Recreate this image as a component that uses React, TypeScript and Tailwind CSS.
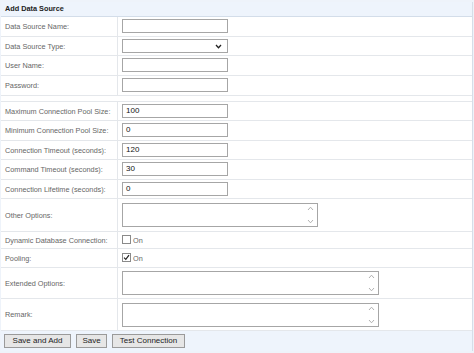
import React from 'react';

const Chevron = () => (
  <svg width="7" height="5" viewBox="0 0 7 5" className="absolute right-[5px] top-[4px]">
    <path d="M1 1 L3.5 3.8 L6 1" fill="none" stroke="#222" strokeWidth="1.3" />
  </svg>
);

const ScrollArrows = () => (
  <div className="absolute right-[3px] top-[2px] bottom-[2px] flex flex-col justify-between">
    <svg width="7" height="5" viewBox="0 0 7 5">
      <path d="M1 4 L3.5 1.2 L6 4" fill="none" stroke="#a8a8a8" strokeWidth="0.9" />
    </svg>
    <svg width="7" height="5" viewBox="0 0 7 5">
      <path d="M1 1 L3.5 3.8 L6 1" fill="none" stroke="#a8a8a8" strokeWidth="0.9" />
    </svg>
  </div>
);

const Row: React.FC<{ label: string; h?: string; children?: React.ReactNode }> = ({ label, h = 'h-[19.5px]', children }) => (
  <div className={`flex ${h} border-b border-[#e4e7eb]`}>
    <div className="w-[117px] shrink-0 flex items-center pl-[4px] pt-[1px] text-[#666] border-r border-[#e4e7eb]">{label}</div>
    <div className="flex items-center pl-[4px]">{children}</div>
  </div>
);

const Input: React.FC<{ value?: string }> = ({ value = '' }) => (
  <div className="w-[106px] h-[14px] border border-[#a6a6a6] bg-white flex items-center pl-[3px] text-[8px] text-[#111]">{value}</div>
);

const TextArea: React.FC<{ w: string }> = ({ w }) => (
  <div className={`relative ${w} h-[24px] border border-[#a6a6a6] bg-white`}>
    <ScrollArrows />
  </div>
);

const Check: React.FC<{ checked?: boolean }> = ({ checked }) => (
  <div className="flex items-center gap-[2px] text-[#666]">
    <div className="w-[9px] h-[9px] border border-[#8a8a8a] bg-white flex items-center justify-center">
      {checked && (
        <svg width="7" height="7" viewBox="0 0 7 7">
          <path d="M1 3.6 L2.8 5.4 L6 1.2" fill="none" stroke="#222" strokeWidth="1.2" />
        </svg>
      )}
    </div>
    <span className="mt-[2px]">On</span>
  </div>
);

const Btn: React.FC<{ label: string; w: string }> = ({ label, w }) => (
  <div className={`${w} h-[14px] border border-[#9a9a9a] bg-[#e6e6e6] flex items-center justify-center text-[8px] text-[#222]`}>{label}</div>
);

export default function App() {
  return (
    <div className="w-[474px] h-[353px] bg-[#eef3fa] pt-[2px] pl-[1px] font-['Liberation_Sans',Arial,sans-serif] text-[7.3px] leading-none">
      <div className="w-[472px] border-r border-[#d6dee8] bg-white">
        <div className="h-[15px] bg-[#eef4fc] border-b border-[#d3dde9] flex items-center pl-[4px] font-bold text-[#222]">Add Data Source</div>
        <Row label="Data Source Name:"><Input /></Row>
        <Row label="Data Source Type:">
          <div className="relative w-[106px] h-[14px] border border-[#a6a6a6] bg-white"><Chevron /></div>
        </Row>
        <Row label="User Name:"><Input /></Row>
        <Row label="Password:" h="h-[20px]"><Input /></Row>
        <div className="h-[6px] border-b border-[#e4e7eb]" />
        <Row label="Maximum Connection Pool Size:"><Input value="100" /></Row>
        <Row label="Minimum Connection Pool Size:"><Input value="0" /></Row>
        <Row label="Connection Timeout (seconds):"><Input value="120" /></Row>
        <Row label="Command Timeout (seconds):"><Input value="30" /></Row>
        <Row label="Connection Lifetime (seconds):"><Input value="0" /></Row>
        <Row label="Other Options:" h="h-[33px]"><TextArea w="w-[196px]" /></Row>
        <Row label="Dynamic Database Connection:" h="h-[17px]"><Check /></Row>
        <Row label="Pooling:" h="h-[19px]"><Check checked /></Row>
        <Row label="Extended Options:" h="h-[31px]"><TextArea w="w-[257px]" /></Row>
        <Row label="Remark:" h="h-[32px]"><TextArea w="w-[257px]" /></Row>
        <div className="h-[20px] bg-[#eef4fc] flex items-center pl-[3px] gap-[5px]">
          <Btn label="Save and Add" w="w-[67px]" />
          <Btn label="Save" w="w-[31px]" />
          <Btn label="Test Connection" w="w-[73px]" />
        </div>
      </div>
    </div>
  );
}
